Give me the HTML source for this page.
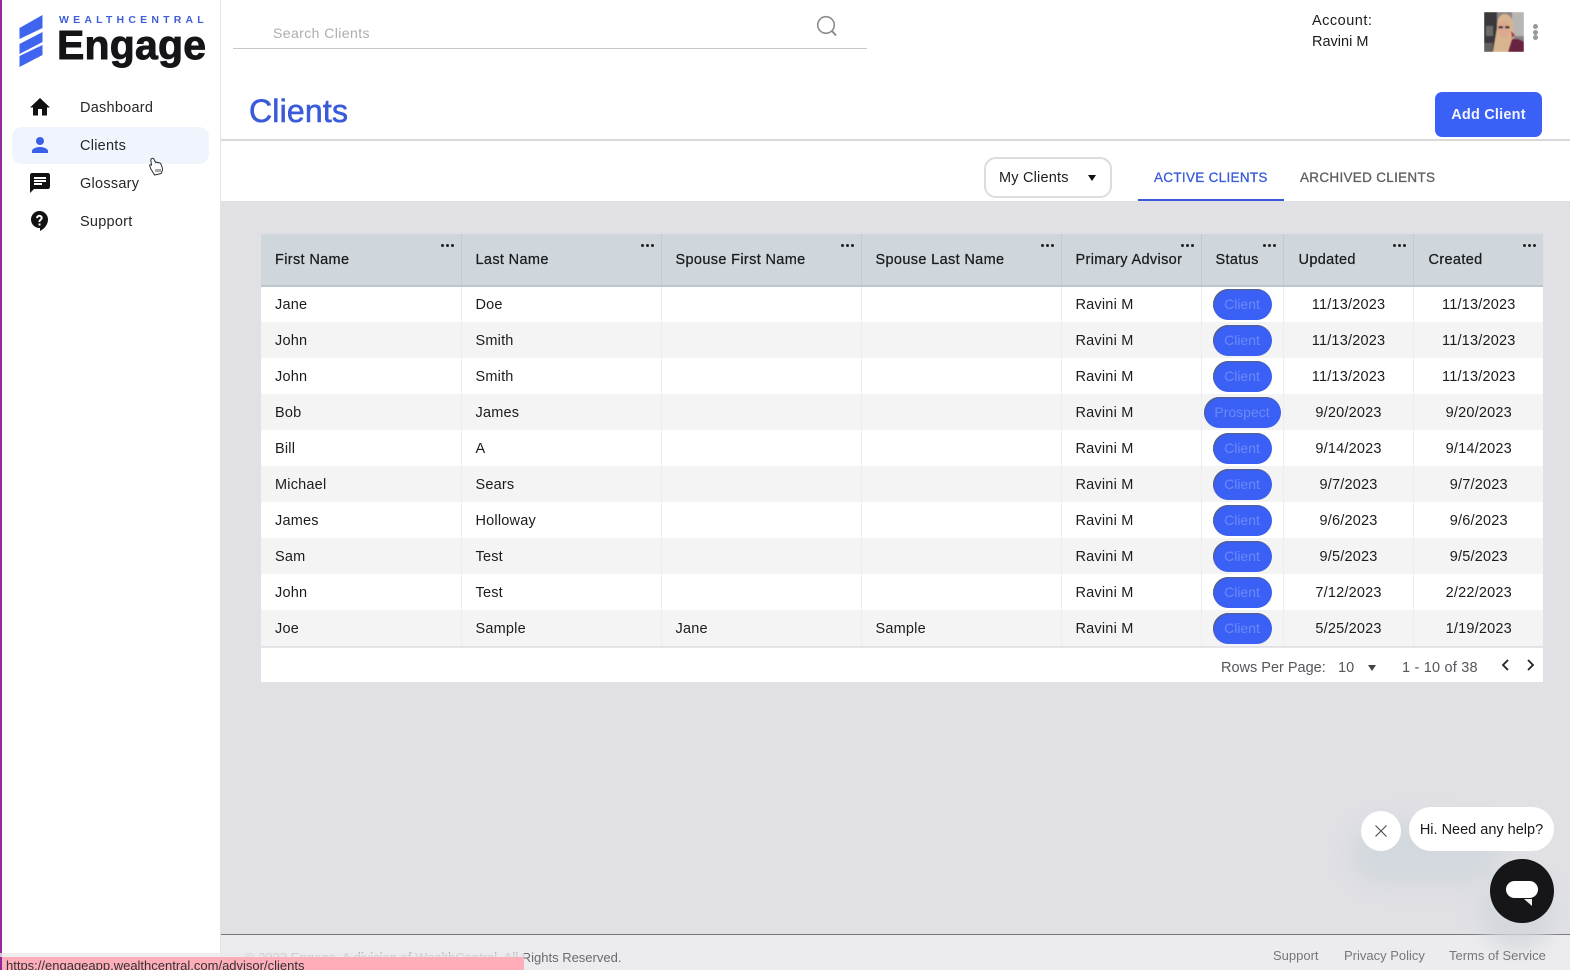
<!DOCTYPE html>
<html><head><meta charset="utf-8"><style>
html,body{margin:0;padding:0;width:1570px;height:970px;overflow:hidden;background:#fff;font-family:"Liberation Sans",sans-serif;color:#1c1c1e}
.a{position:absolute;white-space:nowrap}
#main{position:absolute;left:221px;top:201px;width:1349px;height:733px;background:#e0e0e5}
#foot{position:absolute;left:221px;top:934px;width:1349px;height:36px;background:#ececee;border-top:1.5px solid #77777c;box-sizing:border-box}
.nav{font-size:14.5px;color:#27272b;left:80px;letter-spacing:.25px}
table{position:absolute;left:261px;top:234px;border-collapse:collapse;table-layout:fixed;width:1282px;font-size:14.5px;letter-spacing:.2px}
th{height:52px;background:#cfd7dc;font-weight:normal;text-align:left;padding:1px 0 0 14px;box-sizing:border-box;border-right:1.5px solid #c2cacf;border-bottom:2px solid #bec6cb;position:relative;color:#1c1c1e;letter-spacing:.35px;-webkit-text-stroke:.25px #1c1c1e}
th:nth-child(7),th:nth-child(8){padding-left:15px}
th:last-child,td:last-child{border-right:0}
th i{position:absolute;right:7px;top:10px;width:3px;height:3px;border-radius:50%;background:#222;box-shadow:-5px 0 #222,-10px 0 #222}
td{height:36px;padding:0 0 0 14px;box-sizing:border-box;border-right:1px solid #ededf0;background:#fff;white-space:nowrap}
tr:nth-child(n+2) td:not(.s){padding-top:2px}
tr:nth-child(even) td{background:#f4f4f5}
td.d,tr:nth-child(n+2) td.d{text-align:center;padding-left:1px}
td.s{padding:0;text-align:center}
.p{display:inline-block;height:31px;line-height:31px;width:59px;border-radius:16px;background:#3a60f5;color:#6c89f8;font-size:14px;letter-spacing:0;box-shadow:inset 1px 1px 1px #5a6178;vertical-align:middle}
.p.w{width:77px}
</style></head><body>
<div class="a" style="left:0;top:0;width:1.5px;height:970px;background:#8e2a9a"></div>
<div class="a" style="left:220px;top:0;width:1px;height:970px;background:#e3e3e6"></div>

<svg class="a" style="left:18px;top:13px" width="28" height="56" viewBox="0 0 28 56">
<g fill="#3f64ee"><path d="M1.500 15 L24.500 2 V15 L1.500 26Z"/><path d="M1.500 31 L24.500 19 V29 L1.500 41Z"/><path d="M1.500 43 L24.500 32 V42 L1.500 54Z"/></g></svg>
<div class="a" style="left:59px;top:14px;font-size:10.5px;font-weight:bold;letter-spacing:4.2px;color:#3f5fd8">WEALTHCENTRAL</div>
<div class="a" style="left:57px;top:20px;font-size:41px;line-height:50px;font-weight:bold;color:#151518;letter-spacing:.2px;-webkit-text-stroke:.9px #151518">Engage</div>

<div class="a" style="left:12px;top:127px;width:197px;height:37px;background:#f0f4fd;border-radius:10px"></div>
<svg class="a" style="left:28px;top:95px" width="24" height="24" viewBox="0 0 24 24"><path fill="#111" d="M10 20.500v-6.500h4v6.500h5v-8h3L12 3 2 12.500h3v8z"/></svg>
<svg class="a" style="left:28px;top:133px" width="24" height="24" viewBox="0 0 24 24"><path fill="#3a60e8" d="M12 12c2.200 0 4-1.800 4-4s-1.800-4-4-4-4 1.800-4 4 1.800 4 4 4zm0 2c-2.700 0-8 1.300-8 4v2h16v-2c0-2.700-5.300-4-8-4z"/></svg>
<svg class="a" style="left:28px;top:171px" width="24" height="24" viewBox="0 0 24 24"><path fill="#111" d="M20 2H4c-1.100 0-2 .9-2 2v18l4-4h14c1.100 0 2-.9 2-2V4c0-1.100-.9-2-2-2zM6 9h12v2H6zm8 5H6v-2h8zm4-6H6V6h12z"/></svg>
<svg class="a" style="left:28px;top:209px" width="24" height="24" viewBox="0 0 24 24"><path fill="#111" d="M11.500 2C6.800 2 3 5.800 3 10.500S6.800 19 11.500 19H12v3c4.900-2.300 8-7 8-11.500C20 5.800 16.200 2 11.500 2zm1 14.500h-2v-2h2zm.4-4.800c-.5.400-.5.800-.5 1.300h-1.900c0-1.300.3-1.900 1-2.500.6-.5 1.200-.9 1.200-1.600 0-.7-.6-1.200-1.300-1.200-.8 0-1.400.6-1.400 1.400H8.100c0-1.900 1.500-3.200 3.300-3.200s3.300 1.200 3.300 3c0 1.400-1 2.100-1.800 2.800z"/></svg>
<div class="a nav" style="top:100px">Dashboard</div>
<div class="a nav" style="top:138px">Clients</div>
<div class="a nav" style="top:176px">Glossary</div>
<div class="a nav" style="top:214px">Support</div>
<svg class="a" style="left:149px;top:157px" width="16" height="19" viewBox="0 0 16 19"><path fill="#fff" stroke="#333" stroke-width="1" d="M3 1.500c1-.6 1.800 0 2.200 1l1.300 3c.5-.7 1.500-.5 1.800.2.500-.5 1.400-.4 1.700.3.600-.3 1.400 0 1.700.6l1.400 3.400c.8 2.400.2 4.500-1 6.500l-6.500 1.500-4-6.500-1-3.300c.5-.8 1.500-.5 2 .3L1.800 3c-.1-.7.500-1.200 1.200-1.500z"/><path stroke="#555" d="M7 12v3M9 12v3M11 12v3"/></svg>

<div class="a" style="left:273px;top:25px;font-size:14px;color:#adadb0;letter-spacing:.42px">Search Clients</div>
<div class="a" style="left:233px;top:48px;width:634px;height:1px;background:#c8c8ca"></div>
<svg class="a" style="left:815px;top:14px" width="24" height="24" viewBox="0 0 24 24"><circle cx="11" cy="11" r="8.300" fill="none" stroke="#8c8c8f" stroke-width="1.600"/><path d="M17 17l4 4.500" stroke="#8c8c8f" stroke-width="2" fill="none"/></svg>
<div class="a" style="left:1312px;top:11px;font-size:14.5px;line-height:21px;color:#1c1c1e"><span style="letter-spacing:.5px">Account:</span><br>Ravini M</div>
<svg class="a" style="left:1484px;top:12px" width="40" height="40" viewBox="0 0 40 40">
<defs><filter id="b" x="0" y="0" width="100%" height="100%"><feGaussianBlur stdDeviation=".6"/></filter></defs>
<g filter="url(#b)">
<rect width="40" height="40" fill="#8a8482"/><rect width="13" height="40" fill="#3a373c"/><rect x="28" width="12" height="24" fill="#b8b6b3"/><rect x="2" y="14" width="7" height="10" fill="#6d6a6a"/>
<path d="M9 40 L13 16 Q13 2 21 2 Q29 3 29 14 L30 26 L27 40Z" fill="#d8b48f"/>
<ellipse cx="20" cy="17" rx="6" ry="8" fill="#dba990"/>
<path d="M14.500 14h4.500v2.500h-4.500zM21 14h4.500v2.500H21z" fill="#4a3a38"/>
<path d="M24 40 L28 27 Q35 26 40 30 V40Z" fill="#6b2343"/>
<path d="M27 19l1 7 3-3z" fill="#a8303a"/>
<path d="M0 31h9v9H0z" fill="#66605b"/>
</g></svg>
<div class="a" style="left:1533px;top:24px;width:5px;height:5px;border-radius:50%;background:#99999c"></div>
<div class="a" style="left:1533px;top:29.500px;width:5px;height:5px;border-radius:50%;background:#99999c"></div>
<div class="a" style="left:1533px;top:35px;width:5px;height:5px;border-radius:50%;background:#99999c"></div>

<div class="a" style="left:249px;top:93px;font-size:32px;line-height:36px;font-weight:normal;color:#3a5bd9;letter-spacing:.2px;-webkit-text-stroke:.6px #3a5bd9">Clients</div>
<div class="a" style="left:221px;top:139px;width:1349px;height:2px;background:#dadadc"></div>
<div class="a" style="left:1435px;top:92px;width:107px;height:45px;background:#3a60f5;border-radius:7px;color:#f2f4ff;font-size:14.5px;line-height:47px;text-align:center;font-weight:bold;letter-spacing:.2px">Add Client</div>

<div class="a" style="left:984px;top:157px;width:124px;height:37px;border:2px solid #dcdce0;border-radius:12px;background:#fff"></div>
<div class="a" style="left:999px;top:170px;font-size:14.5px;letter-spacing:.2px">My Clients</div>
<svg class="a" style="left:1087px;top:174px" width="10" height="8"><path d="M1 1h8L5 7z" fill="#111"/></svg>
<div class="a" style="left:1154px;top:170px;font-size:13.5px;letter-spacing:.3px;color:#3a5bd9;-webkit-text-stroke:.3px #3a5bd9">ACTIVE CLIENTS</div>
<div class="a" style="left:1300px;top:170px;font-size:13.5px;letter-spacing:.3px;color:#5f5f63;-webkit-text-stroke:.3px #5f5f63">ARCHIVED CLIENTS</div>
<div class="a" style="left:1138px;top:199px;width:146px;height:2px;background:#3a5bd9"></div>

<div id="main"></div>
<div id="foot"></div>

<table><colgroup><col style="width:200px"><col style="width:200px"><col style="width:200px"><col style="width:200px"><col style="width:140px"><col style="width:82px"><col style="width:130px"><col style="width:130px"></colgroup>
<thead><tr><th>First Name<i></i></th><th>Last Name<i></i></th><th>Spouse First Name<i></i></th><th>Spouse Last Name<i></i></th><th>Primary Advisor<i></i></th><th>Status<i></i></th><th>Updated<i></i></th><th>Created<i></i></th></tr></thead>
<tbody>
<tr><td>Jane</td><td>Doe</td><td></td><td></td><td>Ravini M</td><td class="s"><span class="p">Client</span></td><td class="d">11/13/2023</td><td class="d">11/13/2023</td></tr>
<tr><td>John</td><td>Smith</td><td></td><td></td><td>Ravini M</td><td class="s"><span class="p">Client</span></td><td class="d">11/13/2023</td><td class="d">11/13/2023</td></tr>
<tr><td>John</td><td>Smith</td><td></td><td></td><td>Ravini M</td><td class="s"><span class="p">Client</span></td><td class="d">11/13/2023</td><td class="d">11/13/2023</td></tr>
<tr><td>Bob</td><td>James</td><td></td><td></td><td>Ravini M</td><td class="s"><span class="p w">Prospect</span></td><td class="d">9/20/2023</td><td class="d">9/20/2023</td></tr>
<tr><td>Bill</td><td>A</td><td></td><td></td><td>Ravini M</td><td class="s"><span class="p">Client</span></td><td class="d">9/14/2023</td><td class="d">9/14/2023</td></tr>
<tr><td>Michael</td><td>Sears</td><td></td><td></td><td>Ravini M</td><td class="s"><span class="p">Client</span></td><td class="d">9/7/2023</td><td class="d">9/7/2023</td></tr>
<tr><td>James</td><td>Holloway</td><td></td><td></td><td>Ravini M</td><td class="s"><span class="p">Client</span></td><td class="d">9/6/2023</td><td class="d">9/6/2023</td></tr>
<tr><td>Sam</td><td>Test</td><td></td><td></td><td>Ravini M</td><td class="s"><span class="p">Client</span></td><td class="d">9/5/2023</td><td class="d">9/5/2023</td></tr>
<tr><td>John</td><td>Test</td><td></td><td></td><td>Ravini M</td><td class="s"><span class="p">Client</span></td><td class="d">7/12/2023</td><td class="d">2/22/2023</td></tr>
<tr><td>Joe</td><td>Sample</td><td>Jane</td><td>Sample</td><td>Ravini M</td><td class="s"><span class="p">Client</span></td><td class="d">5/25/2023</td><td class="d">1/19/2023</td></tr>
</tbody></table>
<div class="a" style="left:261px;top:647px;width:1282px;height:35px;background:#fff;border-top:1px solid #e6e6e9;box-sizing:border-box"></div>
<div class="a" style="left:1221px;top:660px;font-size:14.5px;color:#55555a">Rows Per Page:</div>
<div class="a" style="left:1338px;top:660px;font-size:14.5px;color:#55555a">10</div>
<svg class="a" style="left:1367px;top:664px" width="10" height="8"><path d="M1 1h8L5 7z" fill="#444"/></svg>
<div class="a" style="left:1402px;top:660px;font-size:14.5px;color:#55555a;letter-spacing:.2px">1 - 10 of 38</div>
<svg class="a" style="left:1500px;top:658px" width="40" height="14" fill="none" stroke="#222" stroke-width="1.800"><path d="M8 2L3 7l5 5M28 2l5 5-5 5"/></svg>

<div class="a" style="left:1350px;top:822px;width:150px;height:62px;border-radius:35px;background:#d2d8dd;filter:blur(10px)"></div>
<div class="a" style="left:1480px;top:875px;width:74px;height:75px;border-radius:50%;background:#d2d7dc;filter:blur(10px);opacity:.85"></div>
<div class="a" style="left:1361px;top:811px;width:40px;height:40px;border-radius:50%;background:#fff"></div>
<svg class="a" style="left:1375px;top:825px" width="12" height="12" stroke="#444" stroke-width="1" fill="none"><path d="M.5.5l11 11M11.500.5l-11 11"/></svg>
<div class="a" style="left:1409px;top:807px;width:145px;height:44px;border-radius:22px;background:#fff;font-size:14.5px;line-height:47px;text-align:center;color:#1a1a1c">Hi. Need any help?</div>
<div class="a" style="left:1490px;top:859px;width:64px;height:64px;border-radius:50%;background:#161618"></div>
<div class="a" style="left:1506px;top:881px;width:32px;height:17px;border-radius:9px;background:#fff"></div>
<svg class="a" style="left:1524px;top:899px" width="9" height="7"><path d="M0 0h8v7z" fill="#eee"/></svg>

<div class="a" style="left:245px;top:950px;font-size:13px;color:#6a6a6e">© 2023 Engage. A division of WealthCentral. All Rights Reserved.</div>
<div class="a" style="left:1273px;top:948px;font-size:13px;color:#77777b">Support</div>
<div class="a" style="left:1344px;top:948px;font-size:13px;color:#77777b">Privacy Policy</div>
<div class="a" style="left:1449px;top:948px;font-size:13px;color:#77777b">Terms of Service</div>
<div class="a" style="left:0;top:953px;width:524px;height:4px;background:#e8e8ea;opacity:.8"></div>
<div class="a" style="left:2px;top:957px;width:522px;height:13px;background:#feadb9;overflow:hidden;font-size:13px;line-height:18px;color:#333;padding-left:4px;box-sizing:border-box">https://engageapp.wealthcentral.com/advisor/clients</div>
</body></html>
